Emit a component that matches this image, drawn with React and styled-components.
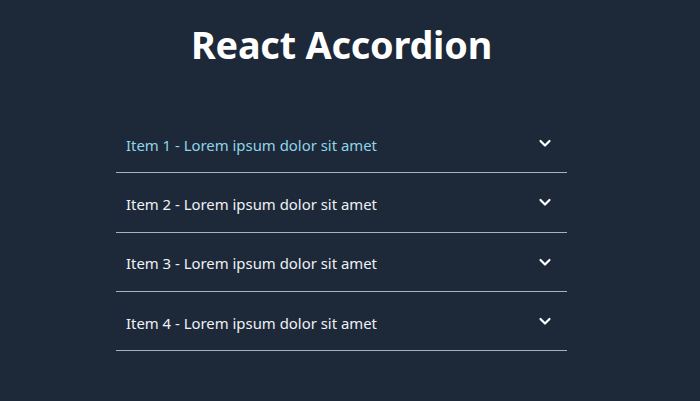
import React, { useState } from 'react';
import styled, { createGlobalStyle } from 'styled-components';

const GlobalStyle = createGlobalStyle`
  html, body {
    margin: 0;
    padding: 0;
    background: #1d2939;
  }
  body {
    font-family: "Noto Sans", "Open Sans", sans-serif;
    color: #e8ecf1;
    min-height: 100vh;
  }
`;

const Page = styled.main`
  width: 683px;
  display: flex;
  flex-direction: column;
  align-items: center;
`;

const Title = styled.h1`
  margin: 19px 0 0;
  font-size: 37.8px;
  font-weight: 700;
  color: #ffffff;
  letter-spacing: -0.2px;
`;

const List = styled.section`
  width: 451px;
  margin-top: 44px;
  display: flex;
  flex-direction: column;
`;

const Item = styled.div`
  border-bottom: 1px solid #a7b0bd;
`;

const Header = styled.button`
  width: 100%;
  height: 58.33px;
  display: flex;
  align-items: center;
  justify-content: space-between;
  padding: 3px 10px 0 10px;
  margin: 0;
  border: none;
  background: transparent;
  font-family: inherit;
  font-size: 14.9px;
  color: ${(p) => (p.$active ? '#8fd4e8' : '#eef1f5')};
  cursor: pointer;
  text-align: left;
`;

const Chevron = styled.svg`
  width: 14px;
  height: 14px;
  margin-right: 5px;
  margin-top: -3px;
  transform: ${(p) => (p.$open ? 'rotate(180deg)' : 'none')};
`;

const items = [
  'Item 1 - Lorem ipsum dolor sit amet',
  'Item 2 - Lorem ipsum dolor sit amet',
  'Item 3 - Lorem ipsum dolor sit amet',
  'Item 4 - Lorem ipsum dolor sit amet',
];

export default function App() {
  const [active, setActive] = useState(0);
  return (
    <>
      <GlobalStyle />
      <Page>
        <Title>React Accordion</Title>
        <List>
          {items.map((label, i) => (
            <Item key={label}>
              <Header $active={active === i} onClick={() => setActive(i)}>
                <span>{label}</span>
                <Chevron viewBox="0 0 14 14" fill="none">
                  <path
                    d="M2.5 5 L7 9.5 L11.5 5"
                    stroke="#ffffff"
                    strokeWidth="2.2"
                    strokeLinecap="round"
                    strokeLinejoin="round"
                  />
                </Chevron>
              </Header>
            </Item>
          ))}
        </List>
      </Page>
    </>
  );
}
